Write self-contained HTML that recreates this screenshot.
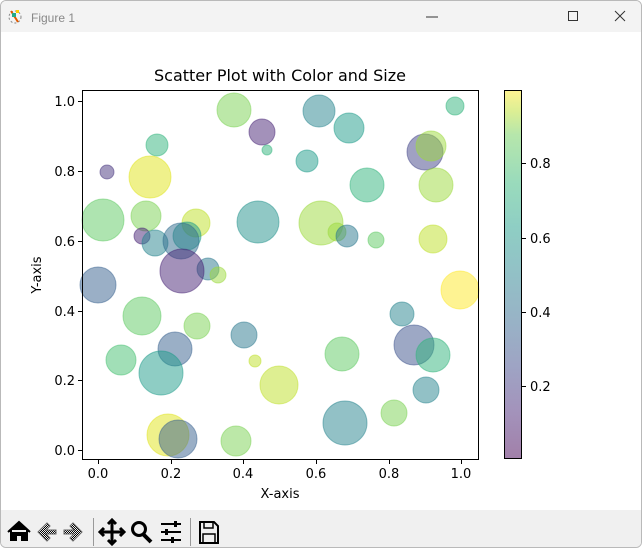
<!DOCTYPE html>
<html><head><style>
html,body{margin:0;padding:0;width:642px;height:548px;overflow:hidden;background:#fff;font-family:"DejaVu Sans","Liberation Sans",sans-serif}
.win{position:absolute;left:0;top:0;width:640px;height:546px;border:1px solid #b9b9b9;border-radius:6px;overflow:hidden;background:#fff}
.tb{position:absolute;left:0;top:0;width:640px;height:31px;background:#f3f3f3}
.tool{position:absolute;left:0;top:509px;width:640px;height:38px;background:#f0f0f0}
</style></head><body>
<div class="win">
<div class="tb">
<svg width="640" height="31" style="position:absolute;left:0;top:0">
<circle cx="14" cy="16" r="6" fill="none" stroke="#888" stroke-dasharray="2 2"/>
<path d="M10 10 L17 21" stroke="#e05a00" stroke-width="2"/><rect x="11" y="12" width="4" height="4" fill="#2a8"/><rect x="15" y="9" width="3" height="3" fill="#fc0"/>
<text x="30" y="21" font-size="12" fill="#888" font-family="Liberation Sans, sans-serif">Figure 1</text>
<path d="M425 16 H437" stroke="#333" stroke-width="1"/>
<rect x="567.5" y="10.5" width="9" height="9" fill="none" stroke="#333"/>
<path d="M614 10 L624 20 M624 10 L614 20" stroke="#333"/>
</svg>
</div>
<svg width="640" height="478" style="position:absolute;left:0;top:31px" viewBox="0 31 640 478">
<defs><linearGradient id="vg" x1="0" y1="1" x2="0" y2="0">
<stop offset="0" stop-color="#440154"/><stop offset="0.13" stop-color="#482878"/><stop offset="0.25" stop-color="#3e4989"/><stop offset="0.38" stop-color="#31688e"/><stop offset="0.5" stop-color="#26828e"/><stop offset="0.63" stop-color="#1f9e89"/><stop offset="0.75" stop-color="#35b779"/><stop offset="0.88" stop-color="#6ece58"/><stop offset="0.94" stop-color="#b5de2b"/><stop offset="1" stop-color="#fde725"/></linearGradient></defs>
<text x="279" y="80" font-size="16" text-anchor="middle" fill="#000">Scatter Plot with Color and Size</text>
<g fill-opacity="0.5" stroke-opacity="0.5" stroke-width="1">
<circle cx="233" cy="109" r="17" fill="#7ad151" stroke="#7ad151"/>
<circle cx="318" cy="110" r="16" fill="#25848e" stroke="#25848e"/>
<circle cx="454" cy="105" r="9" fill="#2fb47c" stroke="#2fb47c"/>
<circle cx="261" cy="131" r="13" fill="#482475" stroke="#482475"/>
<circle cx="348" cy="127" r="15" fill="#1e9c89" stroke="#1e9c89"/>
<circle cx="156" cy="144" r="11" fill="#2fb47c" stroke="#2fb47c"/>
<circle cx="266" cy="149" r="5" fill="#2fb47c" stroke="#2fb47c"/>
<circle cx="424" cy="151" r="18" fill="#414487" stroke="#414487"/>
<circle cx="430" cy="145" r="15" fill="#9bd93c" stroke="#9bd93c"/>
<circle cx="106" cy="171" r="7" fill="#46337e" stroke="#46337e"/>
<circle cx="306" cy="160" r="11" fill="#1e9c89" stroke="#1e9c89"/>
<circle cx="149" cy="176" r="21" fill="#dfe318" stroke="#dfe318"/>
<circle cx="366" cy="184" r="17" fill="#2fb47c" stroke="#2fb47c"/>
<circle cx="435" cy="184" r="17" fill="#9bd93c" stroke="#9bd93c"/>
<circle cx="102" cy="219" r="21" fill="#5ec962" stroke="#5ec962"/>
<circle cx="145" cy="215" r="15" fill="#7ad151" stroke="#7ad151"/>
<circle cx="195" cy="222" r="14" fill="#bddf26" stroke="#bddf26"/>
<circle cx="257" cy="221" r="21" fill="#21918c" stroke="#21918c"/>
<circle cx="320" cy="222" r="22" fill="#9bd93c" stroke="#9bd93c"/>
<circle cx="336" cy="231" r="9" fill="#9bd93c" stroke="#9bd93c"/>
<circle cx="346" cy="235" r="11" fill="#2a788e" stroke="#2a788e"/>
<circle cx="375" cy="239" r="8" fill="#5ec962" stroke="#5ec962"/>
<circle cx="432" cy="238" r="14" fill="#bddf26" stroke="#bddf26"/>
<circle cx="141" cy="235" r="8" fill="#482475" stroke="#482475"/>
<circle cx="154" cy="242" r="13" fill="#25848e" stroke="#25848e"/>
<circle cx="186" cy="235" r="14" fill="#1e9c89" stroke="#1e9c89"/>
<circle cx="180" cy="240" r="18" fill="#2f6c8e" stroke="#2f6c8e"/>
<circle cx="207" cy="268" r="11" fill="#2a788e" stroke="#2a788e"/>
<circle cx="217" cy="274" r="8" fill="#9bd93c" stroke="#9bd93c"/>
<circle cx="181" cy="270" r="22" fill="#482475" stroke="#482475"/>
<circle cx="97" cy="284" r="18" fill="#355f8d" stroke="#355f8d"/>
<circle cx="459" cy="289" r="19" fill="#fde725" stroke="#fde725"/>
<circle cx="141" cy="315" r="19" fill="#5ec962" stroke="#5ec962"/>
<circle cx="196" cy="325" r="13" fill="#7ad151" stroke="#7ad151"/>
<circle cx="243" cy="334" r="13" fill="#2a788e" stroke="#2a788e"/>
<circle cx="401" cy="313" r="12" fill="#25848e" stroke="#25848e"/>
<circle cx="174" cy="348" r="17" fill="#355f8d" stroke="#355f8d"/>
<circle cx="120" cy="359" r="15" fill="#44bf70" stroke="#44bf70"/>
<circle cx="160" cy="372" r="22" fill="#1e9c89" stroke="#1e9c89"/>
<circle cx="254" cy="360" r="6" fill="#bddf26" stroke="#bddf26"/>
<circle cx="341" cy="353" r="17" fill="#5ec962" stroke="#5ec962"/>
<circle cx="413" cy="344" r="20" fill="#3b528b" stroke="#3b528b"/>
<circle cx="432" cy="354" r="17" fill="#2fb47c" stroke="#2fb47c"/>
<circle cx="278" cy="384" r="19" fill="#bddf26" stroke="#bddf26"/>
<circle cx="425" cy="389" r="13" fill="#25848e" stroke="#25848e"/>
<circle cx="393" cy="412" r="13" fill="#7ad151" stroke="#7ad151"/>
<circle cx="344" cy="422" r="22" fill="#25848e" stroke="#25848e"/>
<circle cx="167" cy="434" r="21" fill="#dfe318" stroke="#dfe318"/>
<circle cx="177" cy="438" r="19" fill="#355f8d" stroke="#355f8d"/>
<circle cx="235" cy="440" r="15" fill="#7ad151" stroke="#7ad151"/>
</g>
<rect x="81.5" y="89.5" width="396" height="369" fill="none" stroke="#000" stroke-width="1"/>
<g stroke="#000" stroke-width="1">
<path d="M97.5 459 v4 M170.5 459 v4 M242.5 459 v4 M315.5 459 v4 M388.5 459 v4 M460.5 459 v4"/>
<path d="M81 449.5 h-4 M81 379.5 h-4 M81 310.5 h-4 M81 240.5 h-4 M81 170.5 h-4 M81 100.5 h-4"/>
</g>
<g font-size="13" fill="#000" text-anchor="middle">
<text x="97" y="477">0.0</text><text x="170" y="477">0.2</text><text x="242" y="477">0.4</text><text x="315" y="477">0.6</text><text x="388" y="477">0.8</text><text x="460" y="477">1.0</text>
<text x="279" y="497">X-axis</text>
</g>
<g font-size="13" fill="#000" text-anchor="end">
<text x="74" y="454">0.0</text><text x="74" y="384">0.2</text><text x="74" y="315">0.4</text><text x="74" y="245">0.6</text><text x="74" y="175">0.8</text><text x="74" y="105">1.0</text>
</g>
<text x="0" y="0" font-size="13" text-anchor="middle" transform="translate(40 274) rotate(-90)">Y-axis</text>
<rect x="503.5" y="89.5" width="17" height="368" fill="url(#vg)" fill-opacity="0.5" stroke="#000"/>
<g stroke="#000"><path d="M521 162.5 h4 M521 237.5 h4 M521 311.5 h4 M521 385.5 h4"/></g>
<g font-size="13" fill="#000"><text x="529" y="167">0.8</text><text x="529" y="242">0.6</text><text x="529" y="316">0.4</text><text x="529" y="390">0.2</text></g>
</svg>
<div class="tool">
<svg width="640" height="38" style="position:absolute;left:0;top:0">
<defs><pattern id="hp" width="2" height="2" patternUnits="userSpaceOnUse"><rect width="1" height="1" fill="#000"/><rect x="1" y="1" width="1" height="1" fill="#000"/></pattern></defs>
<path d="M7 22 L18 12 L29 22 M10 20 V30 H15 V25 H21 V30 H26 V20" fill="#000" stroke="#000" stroke-width="2"/>
<path d="M46 13 L37 22 L46 31 L49 28 L45 24 H55 V20 H45 L49 16 Z" fill="url(#hp)" stroke="#666" stroke-width="1"/>
<path d="M72 13 L81 22 L72 31 L69 28 L73 24 H63 V20 H73 L69 16 Z" fill="url(#hp)" stroke="#666" stroke-width="1"/>
<line x1="92.5" y1="8" x2="92.5" y2="36" stroke="#999"/>
<path d="M111 10 V34 M99 22 H123 M107 14 L111 10 L115 14 M107 30 L111 34 L115 30 M103 18 L99 22 L103 26 M119 18 L123 22 L119 26" stroke="#000" stroke-width="3" fill="none"/>
<circle cx="138" cy="19" r="6.5" fill="none" stroke="#000" stroke-width="3"/><path d="M142 24 L150 32" stroke="#000" stroke-width="4"/>
<path d="M160 14 H180 M160 22 H180 M160 30 H180" stroke="#000" stroke-width="2"/>
<rect x="173" y="11" width="3" height="6" fill="#000"/><rect x="164" y="19" width="3" height="6" fill="#000"/><rect x="170" y="27" width="3" height="6" fill="#000"/>
<line x1="189.5" y1="8" x2="189.5" y2="36" stroke="#999"/>
<path d="M199 12 H213 L217 16 V33 H199 Z" fill="none" stroke="#000" stroke-width="2"/>
<rect x="203" y="12" width="9" height="6" fill="none" stroke="#000" stroke-width="1.5"/><rect x="202" y="24" width="12" height="9" fill="none" stroke="#000" stroke-width="1.5"/>
</svg>
</div>
</div>
</body></html>
